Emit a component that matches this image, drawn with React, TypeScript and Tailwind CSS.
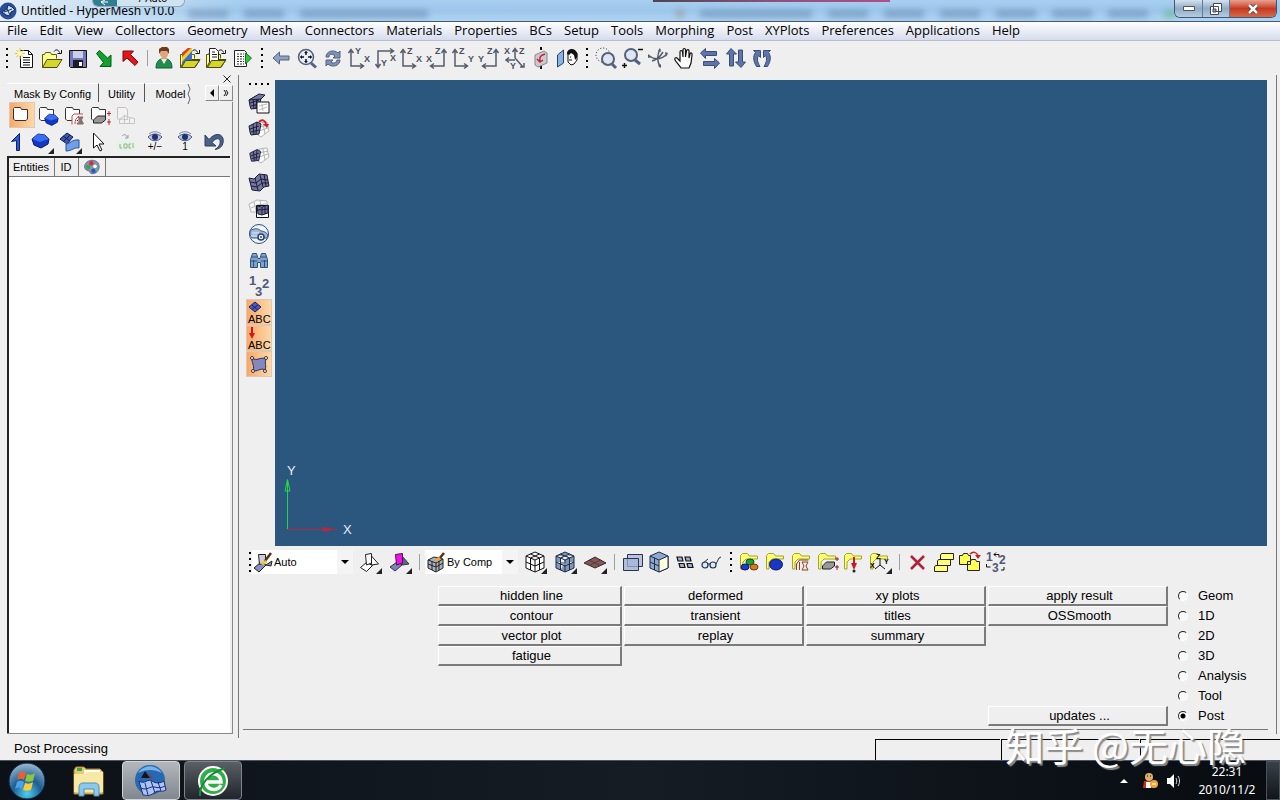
import { useState } from "react";
import type { ReactNode } from "react";

const MENUS = [
  "File", "Edit", "View", "Collectors", "Geometry", "Mesh", "Connectors", "Materials", "Properties",
  "BCs", "Setup", "Tools", "Morphing", "Post", "XYPlots", "Preferences", "Applications", "Help",
];

const PANELS = [
  ["hidden line", "contour", "vector plot", "fatigue"],
  ["deformed", "transient", "replay"],
  ["xy plots", "titles", "summary"],
  ["apply result", "OSSmooth"],
];

const PAGES = ["Geom", "1D", "2D", "3D", "Analysis", "Tool", "Post"];

// shared icon parts
const openFolder = (
  <>
    <path d="M2.5 21.500V8.500h2l1-2h5l1 2h5v4" fill="#ffff8c" stroke="#5a5a10" />
    <path d="M2.500 21.500l4.500-8h15l-5 8z" fill="#d6d62a" stroke="#4a4a10" />
    <path d="M14 5.500c2-2.500 4.500-2 5.500 1M21.500 4v3.500h-4" fill="none" stroke="#111" />
  </>
);
const tri = <path d="M24 18v6h-6z" fill="#222" />;
const yellowFolder = <path d="M2.500 19V5.500l2-2h5l2 2.500h8V9H8l-3 3v7z" fill="#ffff70" stroke="#a3a32c" />;
const whiteFolder = <path d="M3.500 16V5.500l1-1h6l1 2h6v9.500l-1.500 1.500h-11z" fill="#fdfdfd" stroke="#333" />;
const meshLeft = (
  <>
    <path d="M2 8l8-4 4 2-2 10-8 1-1-3z" fill="#74779f" stroke="#1c1c38" />
    <path d="M3 11l9-3M4 14l8-2M6 6l1 11M10 4l-1 12" fill="none" stroke="#1c1c38" />
  </>
);
const meshGhost = (
  <>
    <path d="M12 5l8-1 2 9-8 6-3-2z" fill="#f8f8f8" stroke="#b5b5b5" />
    <path d="M12 9l9-2M12 13l9-3M16 5l2 11" fill="none" stroke="#b5b5b5" />
  </>
);
const globe = (
  <>
    <path d="M2 9l6-5 7 1 4 4-1 5-7 4-7-3z" fill="#1238c4" stroke="#08186b" />
    <path d="M2 9l8 3 9-3-4-4-7-1z" fill="#3c6cf2" />
  </>
);
const cubeLines = "M12 2L21 6V18L12 22L3 18V6zM3 6L12 10L21 6M12 10V22M7.500 4L16.500 8V20M16.500 4L7.500 8V20M3 12L12 16L21 12";

const axes = (left: boolean, down: boolean, a: string, b: string) => (
  <>
    <g fill="none" stroke="#565c6c" strokeWidth="1.500">
      {down ? (
        <path d="M5 21V5H20M2.500 18L5 21.500L7.500 18M17 2.500L20.500 5L17 7.500" />
      ) : left ? (
        <path d="M19 4V20H6M16.500 7L19 3.500L21.500 7M9 17.500L5.500 20L9 22.500" />
      ) : (
        <path d="M4 4V20H16M1.500 7L4 3.500L6.500 7M13 17.500L16.500 20L13 22.500" />
      )}
    </g>
    <g fill="#4a5060" fontFamily="Liberation Sans, sans-serif" fontWeight="bold" fontSize="9">
      <text x={left ? 10 : 8} y={down ? 20 : 8}>{a}</text>
      <text x={left ? 1 : 17} y={down ? 15 : 16}>{b}</text>
    </g>
  </>
);

const ICONS: Record<string, ReactNode> = {
  newFile: (
    <>
      <path d="M6.500 4.500h8l4 4v13h-12z" fill="#fff" stroke="#111" />
      <path d="M14.500 4.500v4h4M9 11.500h7M9 14h7M9 16.500h7M9 19h7" fill="none" stroke="#111" />
      <path d="M6 2v11M1 7.500h10M2.500 4l7 7M9.500 4l-7 7" stroke="#e6bf3c" />
      <circle cx="6" cy="7.500" r="2.500" fill="#fff6b0" />
    </>
  ),
  open: openFolder,
  save: (
    <>
      <path d="M3.500 4.500h17v17h-16l-1-1z" fill="#7478b8" stroke="#111" />
      <path d="M7 5h10v7H7z" fill="#c9cfe8" />
      <path d="M7 14h10v7H7z" fill="#1b1b2b" />
      <path d="M13 16h3v4h-3z" fill="#fff" />
    </>
  ),
  importIcon: <path d="M4.500 7.500l3-3 8 7.500 3.500-3v11.500H8l3.500-4z" fill="#12a12c" stroke="#075c16" />,
  exportIcon: <path d="M5 5h10.500l-3 3.500 7.500 7.500-3 3.500-8-7.500L5 15.500z" fill="#e3171b" stroke="#7e0a0d" />,
  user: (
    <>
      <path d="M4 22c0-6 3-9 6-9h4c4 0 6 4 6 9z" fill="#1f8f4d" stroke="#11602f" />
      <path d="M9 13l3 5 3-5z" fill="#f5e6d8" />
      <path d="M8 3h8v6l-2 4h-3L8 9z" fill="#e0a67c" />
      <path d="M7 8V3l3-2h5l2 2v5l-2-3H9z" fill="#6b3a22" />
    </>
  ),
  openRainbow: (
    <>
      {openFolder}
      <path d="M4 18V7l6-5h4v12z" fill="#3b6be0" />
      <path d="M4 16V7l6-5h4v3z" fill="#e8d32a" />
      <path d="M4 11V7l6-5h3z" fill="#e23b2c" />
      <path d="M3.500 21.500l4-7h14l-5 7z" fill="#d6d62a" stroke="#4a4a10" />
    </>
  ),
  openDoc: (
    <>
      {openFolder}
      <path d="M5.500 16V2.500h6l3 3V14" fill="#fff" stroke="#222" />
      <path d="M8 6h3M8 8.500h5M8 11h5" stroke="#222" />
      <path d="M3.500 21.500l4-7h14l-5 7z" fill="#d6d62a" stroke="#4a4a10" />
    </>
  ),
  docRun: (
    <>
      <path d="M4.500 4.500h10l2 2v14h-12z" fill="#fff" stroke="#222" />
      <path d="M7 8h7M7 10.500h7M7 13h7M7 15.500h7M7 18h7" stroke="#333" strokeDasharray="2 1" />
      <path d="M15.500 7l6 5-6 6z" fill="#2dc53a" stroke="#0c7a19" />
    </>
  ),
  back: <path d="M4 12l6.500-6v4H20v4h-9.500v4z" fill="#8fa2c4" stroke="#52617f" />,
  fit: (
    <>
      <path d="M16 17l5 4.500" stroke="#52617f" strokeWidth="3" />
      <circle cx="11" cy="11" r="7.500" fill="#e8edf6" stroke="#52617f" strokeWidth="1.500" />
      <path d="M11 5.500v3.500M11 13v3.500M5.500 11H9M13 11h3.500" stroke="#111" strokeWidth="1.500" />
      <path d="M9 7l2-2 2 2zM9 15l2 2 2-2zM7 9l-2 2 2 2zM15 9l2 2-2 2z" fill="#111" />
    </>
  ),
  refresh: (
    <>
      <path d="M5 11c0-6 8-8 12-4l2-2v7h-7l2-2c-3-3-6-2-6 1z" fill="#7c90b6" stroke="#52617f" />
      <path d="M19 14c0 6-8 8-12 4l-2 2v-6h7l-2 2c3 2 5 1 6-2z" fill="#7c90b6" stroke="#52617f" />
    </>
  ),
  xyTop: axes(false, false, "Y", "X"),
  xyBottom: axes(false, true, "Y", "X"),
  xzLeft: axes(false, false, "Z", "X"),
  xzRight: axes(true, false, "Z", "X"),
  yzLeft: axes(false, false, "Z", "Y"),
  yzRight: axes(true, false, "Z", "Y"),
  iso: (
    <>
      <path d="M12 12V3M12 12l8 9M12 14H3M9.500 6L12 2.500L14.500 6M17 21h4v-4M6 11.500L3 14l3 2.500" fill="none" stroke="#565c6c" strokeWidth="1.500" />
      <g fill="#4a5060" fontFamily="Liberation Sans, sans-serif" fontWeight="bold" fontSize="9">
        <text x="1" y="8">X</text>
        <text x="16" y="8">Z</text>
        <text x="7" y="23">Y</text>
      </g>
    </>
  ),
  reverse: (
    <>
      <path d="M12 1v3M12 20v3" stroke="#111" strokeWidth="2" />
      <path d="M6 9l9-4 3 2v10l-9 4-3-2z" fill="#c8cbd2" stroke="#888" />
      <path d="M16 8c-4 1-6 3-5 7M8 13l3 3 3-2" fill="none" stroke="#c9202b" strokeWidth="1.500" />
    </>
  ),
  viewer: (
    <>
      <path d="M2.500 9l6-5v13l-6 4z" fill="#8ab4e6" stroke="#27406b" />
      <path d="M13 6l5-2 4 3v7l-3 4-3 1-3-3z" fill="#fff" stroke="#111" />
      <path d="M12 8c0-6 8-7 10-1 1 3 0 5-2 7l-1-5-3-2-2 2z" fill="#111" />
      <path d="M15 11h1M14 14h3" stroke="#111" />
    </>
  ),
  zoomArea: (
    <>
      <circle cx="9" cy="9" r="7" fill="none" stroke="#111" strokeDasharray="1 2" />
      <path d="M18 18l4 4" stroke="#52617f" strokeWidth="3" />
      <circle cx="14" cy="13" r="6" fill="#dfe6f1" stroke="#52617f" strokeWidth="2" />
    </>
  ),
  zoomInOut: (
    <>
      <path d="M15 14l5 4" stroke="#52617f" strokeWidth="3" />
      <circle cx="11" cy="9" r="6" fill="#dfe6f1" stroke="#52617f" strokeWidth="2" />
      <path d="M2 19.500h5M4.500 17v5M18 3.500h5" stroke="#111" strokeWidth="1.500" />
    </>
  ),
  rotate: (
    <>
      <path d="M14 3c-3 6-3 12 0 18M3 10c6 4 12 4 18-2M6 15c4-1 8-4 11-9" fill="none" stroke="#565c6c" strokeWidth="1.500" />
      <path d="M12 5l2-3 1 4zM19 6l3 1-2 4zM2 8v4l4-1zM12 20l3 2v-4z" fill="#565c6c" />
    </>
  ),
  pan: (
    <path
      d="M9 22c-2-3-5-6-6-8-1-2 1-3 2-2l3 3V6c0-2 2-2 2.500 0l.5 5V4c0-2 2.500-2 2.500 0v7l1-6c.5-2 2.500-1.500 2.500 0v7l1-4c.5-2 2.500-1 2 1l-1 8-2 5z"
      fill="#fff"
      stroke="#111"
      strokeWidth="1.200"
    />
  ),
  swapH: <path d="M2.500 7l5-4.500v3h11v4h-11v3zM21.500 17l-5-4.500v3h-11v4h11v3z" fill="#5d76a8" stroke="#3a4d77" />,
  swapV: <path d="M7 2.500L2.500 8h3v12h4V8h3zM17 21.500l4.500-5.500h-3V4h-4v12h-3z" fill="#5d76a8" stroke="#3a4d77" />,
  spin: (
    <>
      <path d="M10.500 4.500h-7l2 2c-3 4-2 9 1 14h3.500c-3-5-3-8-1.500-11l2 2z" fill="#5d76a8" stroke="#3a4d77" />
      <path d="M13.500 4.500h7l-2 2c3 4 2 9-1 14H14c3-5 3-8 1.500-11l-2 2z" fill="#5d76a8" stroke="#3a4d77" />
    </>
  ),
  // browser panel
  folder: whiteFolder,
  folderComp: <>{whiteFolder}<g transform="translate(7 8) scale(.8)">{globe}</g></>,
  folderMat: (
    <>
      {whiteFolder}
      <path d="M10 21.500V13l2-2h9M13 21c0-4 1-6 4-8M15 21h6l-2-4 2-3h-5l2 3z" fill="#fff" stroke="#c14646" />
      <path d="M16 21h6l-2-4 1-3h-5l2 3z" fill="#777" />
    </>
  ),
  folderProp: (
    <>
      {whiteFolder}
      <path d="M5.500 17l4-4h8v4l-4 3h-8z" fill="#999" stroke="#222" />
      <path d="M21 8v5M21 16v6M19 10.500h4M19 19h4" stroke="#b42a2a" />
    </>
  ),
  folderOff: (
    <path d="M3.500 16V4.500h8l2 2v10zM5.500 20.500v-4l5-4 5 2 5 1v5zM10.500 12v8M15.500 14v6" fill="#f2f2f2" stroke="#c4c4c4" />
  ),
  flag: <path d="M17.500 3.500v17h-3v-10l-5 1z" fill="#2b58d9" stroke="#0b2170" />,
  comp: <>{globe}{tri}</>,
  compMesh: (
    <>
      <path d="M2 9l7-6 6 4-6 7zM5 6l7 5M5.500 11.500L12 5" fill="#3c56b4" stroke="#101c50" />
      <path d="M8 14c4 0 6-5 13-4v8c-5-1-7 3-13 3z" fill="#6f9fe8" stroke="#2450a0" />
      {tri}
    </>
  ),
  pointer: <path d="M7.500 3v15l3.500-3 3 6 2-1-3-6h5z" fill="#fff" stroke="#111" />,
  label: (
    <>
      <path d="M3 11h18v10H3z" fill="#dff5e7" />
      <path d="M6 14v4h2M10 14v4h3v-4zM17 14h-2v4h2M19 13v5" stroke="#9fae80" fill="none" />
      <path d="M8 6c2-2 4-2 5 1M14 5v3h-3" stroke="#99a" fill="none" />
    </>
  ),
  palette: (
    <>
      <path d="M12 3c8 0 11 6 9 12-2 5-6 6-9 6s-2-3-5-4-5-2-5-6c1-5 5-8 10-8z" fill="#8b8fb4" stroke="#555a80" />
      <circle cx="11" cy="7" r="3" fill="#d32f3c" />
      <circle cx="7" cy="12" r="3" fill="#2cae48" />
      <circle cx="16" cy="11" r="2.500" fill="#fff" />
      <circle cx="14" cy="17" r="3" fill="#2b55c8" />
      <circle cx="18" cy="15" r="2" fill="#42c47a" />
    </>
  ),
  undo: <path d="M3 5v11h11l-4-3.500c3-4 7-5 8-2 1 4-2 7-5 9 7-1 9-6 8-11-2-6-9-5-14 1z" fill="#4a6088" stroke="#30405f" />,
  // display toolbar
  maskBox: (
    <>
      {meshLeft}
      <path d="M2 8l10-6 6 1-4 4z" fill="#74779f" stroke="#1c1c38" />
      <path d="M10 10h12v11H10z" fill="#fdfdfd" stroke="#111" />
      <path d="M12 14l8-2M12 18l8-3M15 12l1 7" stroke="#bbb" />
    </>
  ),
  maskRev: (
    <>
      {meshGhost}
      {meshLeft}
      <path d="M12 4c3-3 6-2 7 2" fill="none" stroke="#c9202b" strokeWidth="2" />
      <path d="M16 6h6l-2 4z" fill="#c9202b" />
    </>
  ),
  maskAdj: <>{meshGhost}<g transform="translate(1 2) scale(.9)">{meshLeft}</g></>,
  unmask: (
    <>
      <path d="M2 8l5 1 5-5 8 1 2 11-5 1-4 4-8-1z" fill="#74779f" stroke="#1c1c38" />
      <path d="M3 12l6 1 5-4 7 1M4 16l6 1 5-4 6 0M8 8l3 12M13 5l3 12M17 4l2 12" fill="none" stroke="#1c1c38" />
    </>
  ),
  unmaskBox: (
    <>
      <path d="M2 8l8-4 10 1v11H4z" fill="#f8f8f8" stroke="#b5b5b5" />
      <path d="M4 12l7-3 8-1M7 6l2 9M13 4l1 7" fill="none" stroke="#b5b5b5" />
      <path d="M9.500 9.500h12v12h-12z" fill="#fff" stroke="#111" />
      <path d="M10 10l5 1 6-2v8l-6 2-4-1z" fill="#6c709c" stroke="#1c1c38" />
      <path d="M11 14l10-1M15 11v8M18 10v8" stroke="#1c1c38" />
    </>
  ),
  car: (
    <>
      <circle cx="12" cy="12" r="9.500" fill="#eef4fb" stroke="#2e4f80" />
      <path d="M3 9c4-3 8-3 11 0 3 0 6 2 7 4l-1 3H5l-2-3z" fill="#9fb8d8" stroke="#3a5a8a" />
      <path d="M5 11h7M4 14h7" stroke="#e4eefa" />
      <circle cx="14" cy="15" r="3" fill="#fff" stroke="#24406b" strokeWidth="1.500" />
      <circle cx="14" cy="15" r="1" fill="#24406b" />
    </>
  ),
  find: (
    <>
      <path d="M3.500 19.500v-8l2-6h4l1.500 5h2l1.500-5h4l2 6v8h-7v-5h-3v5z" fill="#7fa3d0" stroke="#2f5078" />
      <path d="M5 9h5M14 9h5M4 13h6M14 13h6M6.500 12v7M17.500 12v7" stroke="#2f5078" />
    </>
  ),
  numbers: (
    <g fill="#4e5878" fontFamily="Liberation Sans, sans-serif" fontWeight="bold">
      <text x="2" y="11" fontSize="13">1</text>
      <text x="15" y="14" fontSize="13">2</text>
      <text x="8" y="22" fontSize="13">3</text>
    </g>
  ),
  elemAbc: (
    <>
      <path d="M2 7l6-5 6 5-6 5zM5 5l6 5M5 9.500L11 5" fill="#4a5cc0" stroke="#1b2560" />
      <text x="1" y="23" fontSize="11" fontFamily="Liberation Sans, sans-serif">ABC</text>
    </>
  ),
  loadAbc: (
    <>
      <path d="M5 1v7" stroke="#d01818" strokeWidth="2" />
      <path d="M2 7h6l-3 6z" fill="#d01818" />
      <text x="1" y="23" fontSize="11" fontFamily="Liberation Sans, sans-serif">ABC</text>
    </>
  ),
  surface: (
    <>
      <path d="M5 6c5 4 9-2 14 1-2 4 1 7-1 11-5-3-8 3-12 0 2-4-2-8-1-12z" fill="#8388bd" stroke="#2b3060" />
      <circle cx="5" cy="6" r="1.500" fill="#fff" stroke="#333" />
      <circle cx="19" cy="6" r="1.500" fill="#fff" stroke="#333" />
      <circle cx="6" cy="19" r="1.500" fill="#fff" stroke="#333" />
      <circle cx="18" cy="19" r="1.500" fill="#fff" stroke="#333" />
    </>
  ),
  // visualization toolbar
  auto: (
    <>
      <path d="M2 18l7-6 5 3-7 7z" fill="#8690c4" stroke="#222" />
      <path d="M6.500 4.500h7v8l-6 2z" fill="#c9cfe0" stroke="#222" />
      <path d="M14 15l6-4-1 5z" fill="#8690c4" stroke="#222" />
      <path d="M19 3l-6 8" stroke="#5a2f14" strokeWidth="2.500" />
      <path d="M8 13l6-3 1 3-4 2z" fill="#f2c235" />
    </>
  ),
  wireGeom: (
    <>
      <path d="M2.500 17.500l6-5 6 3-6 6z" fill="#fff" stroke="#222" />
      <path d="M13.500 6l7 8-7 1z" fill="#fff" stroke="#222" />
      <path d="M7.500 4.500l6-1V13l-5 2z" fill="#fff" stroke="#222" />
      {tri}
    </>
  ),
  shadeGeom: (
    <>
      <path d="M2 17l7-5 5 3-7 6z" fill="#7d82bd" stroke="#333" />
      <path d="M14 6l7 8-7 1z" fill="#60648c" stroke="#333" />
      <path d="M7.500 4.500l7-1V13l-6 2z" fill="#f012e8" stroke="#5a0a56" />
      {tri}
    </>
  ),
  byComp: (
    <>
      <path d="M3 10l6-3 9 2v9l-7 4-8-4z" fill="#aab0bd" stroke="#222" />
      <path d="M3 10l8 3 7-4M11 13v9M7 11v9M14 11v9M3 14l8 3 7-4" fill="none" stroke="#222" />
      <path d="M19 3l-5 6" stroke="#5a2f14" strokeWidth="2.500" />
      <path d="M10 9l4-2 2 2-4 3z" fill="#f2a535" />
    </>
  ),
  wireCube: <><path d={cubeLines} fill="#fff" stroke="#111" />{tri}</>,
  shadeCube: <><path d={cubeLines} fill="#8197b8" stroke="#1d2b44" />{tri}</>,
  shell: (
    <>
      <path d="M1 13l11-6 11 6-11 5z" fill="#8b5355" stroke="#2d2d2d" />
      <path d="M6 10l11 5.500M17.500 10L6 15.500" stroke="#444" />
      {tri}
    </>
  ),
  transparent: (
    <>
      <path d="M6.500 4.500h15v12h-15z" fill="#b9c4dc" stroke="#26344f" />
      <path d="M2.500 8.500h15v12h-15z" fill="#a9b8d6" fillOpacity=".9" stroke="#26344f" />
      <path d="M6.500 9v7.500H17" fill="none" stroke="#8292b4" />
    </>
  ),
  feature: (
    <>
      <path d="M12 2l9 4v12l-9 4-9-4V6z" fill="#8ea9d0" stroke="#1d2b44" />
      <path d="M12 10l9-4v12l-9 4z" fill="#fffde0" stroke="#1d2b44" />
      <path d="M3 6l9 4M7.500 8v12M3 12l9 4" stroke="#1d2b44" />
    </>
  ),
  shrink: (
    <path
      d="M4 7h5l1 4H5zM12 7h5l1 4h-5zM6 13.500h5l1 4H7zM14 13.500h5l1 4h-5z"
      fill="#a4acd0"
      stroke="#111"
      strokeWidth="1.200"
    />
  ),
  glasses: (
    <>
      <circle cx="6" cy="15" r="3" fill="#dbe9f8" stroke="#26344f" strokeWidth="1.200" />
      <circle cx="14" cy="15" r="3" fill="#dbe9f8" stroke="#26344f" strokeWidth="1.200" />
      <path d="M9 14h2M4 13l5-4M17 14l3-6 2-1" fill="none" stroke="#26344f" />
    </>
  ),
  yAssembly: (
    <>
      {yellowFolder}
      <ellipse cx="12" cy="12" rx="4" ry="3" fill="#1fa13a" stroke="#0a4a18" />
      <ellipse cx="7" cy="17" rx="4" ry="3" fill="#1b3cd0" stroke="#081a60" />
      <ellipse cx="16" cy="17" rx="4" ry="3" fill="#d97a20" stroke="#693808" />
    </>
  ),
  yComp: <>{yellowFolder}<ellipse cx="12" cy="14.500" rx="6.500" ry="5.500" fill="#1b36c4" stroke="#081a60" /></>,
  yMat: (
    <>
      {yellowFolder}
      <path d="M6.500 20v-6l3-4h9M9.500 20v-8M12 20h6l-2-4 2-4h-6l2 4z" fill="#eee" stroke="#8c4020" />
    </>
  ),
  yProp: (
    <>
      {yellowFolder}
      <path d="M6.500 16l4-4h8v4l-4 3h-8z" fill="#999" stroke="#222" />
      <path d="M21 7v4M21 15v5M19 9h4M19 17h4" stroke="#8c2020" />
    </>
  ),
  yLoad: (
    <>
      {yellowFolder}
      <path d="M12 7v8" stroke="#d01818" strokeWidth="2" />
      <path d="M9 13h6l-3 7z" fill="#d01818" />
      <circle cx="12" cy="21" r="1.500" fill="#222" />
    </>
  ),
  ySys: (
    <>
      {yellowFolder}
      <path d="M12 8v7l-5 4M12 15l5 4" fill="none" stroke="#111" />
      <g fontFamily="Liberation Sans, sans-serif" fontWeight="bold" fontSize="7">
        <text x="8" y="9">Z</text>
        <text x="2" y="18">X</text>
        <text x="16" y="14">Y</text>
      </g>
      {tri}
    </>
  ),
  remove: <path d="M5 6l13 13M18 6L5 19" stroke="#b01f35" strokeWidth="2.500" />,
  organize: (
    <path
      d="M8.500 9.500V5l1-1.500h12v6zM5.500 15.500V11l1-1.500h12v6zM2.500 21.500V17l1-1.500h12v6z"
      fill="#ffff78"
      stroke="#222"
    />
  ),
  move: (
    <>
      <path d="M1.500 5.500h3l1-2h4l1 2h2v9h-11zM9.500 11.500h3l1-2h4l1 2h3v9h-12z" fill="#ffff58" stroke="#222" />
      <path d="M12 4c3-3 7-2 8 2" fill="none" stroke="#c9202b" strokeWidth="1.500" />
      <path d="M17 5h6l-3 4z" fill="#c9202b" />
    </>
  ),
  renumber: (
    <>
      <g fill="#4e5878" fontFamily="Liberation Sans, sans-serif" fontWeight="bold" fontSize="12">
        <text x="2" y="11">1</text>
        <text x="15" y="14">2</text>
        <text x="8" y="22">3</text>
      </g>
      <path d="M10 4.500h5v3M12 2.500l-2 2 2 2M2.500 14v3h4M17 20h3v-3" fill="none" stroke="#111" />
    </>
  ),
};

function Icon({ name }: { name: string }) {
  return (
    <svg viewBox="0 0 24 24" className="h-6 w-6 shrink-0" aria-hidden="true">
      {ICONS[name]}
    </svg>
  );
}

function Tool({ name, active }: { name: string; active?: boolean }) {
  return (
    <button
      type="button"
      aria-label={name}
      className={
        active
          ? "flex h-[26px] w-[26px] shrink-0 items-center justify-center border border-[#e0c8b0] bg-gradient-to-r from-[#f8a868] to-[#fcd8a8]"
          : "flex h-[26px] w-[26px] shrink-0 items-center justify-center"
      }
    >
      <Icon name={name} />
    </button>
  );
}

function Tools({ names }: { names: string[] }) {
  return (
    <>
      {names.map((n) => (
        <Tool key={n} name={n} />
      ))}
    </>
  );
}

function Grip() {
  return (
    <div className="flex w-[13px] shrink-0 flex-col items-center gap-1">
      {[0, 1, 2, 3].map((i) => (
        <span key={i} className="h-0.5 w-0.5 bg-black" />
      ))}
    </div>
  );
}

function Divider({ wide }: { wide?: boolean }) {
  return (
    <div className={wide ? "flex w-3 shrink-0 justify-center" : "flex w-2 shrink-0 justify-center"}>
      <span className="h-4 w-px bg-[#a0a0a0]" />
    </div>
  );
}

function Combo({ icon, label, options, width }: { icon: string; label: string; options: string[]; width: string }) {
  return (
    <div className={`flex h-6 shrink-0 items-center bg-white ${width}`}>
      <Icon name={icon} />
      <select aria-label={label} className="-ml-0.5 min-w-0 flex-1 appearance-none bg-transparent text-[11px] outline-none">
        {options.map((o) => (
          <option key={o}>{o}</option>
        ))}
      </select>
      <span className="flex h-6 w-4 items-center justify-center bg-[#f4f4f4]">
        <svg viewBox="0 0 8 4" className="h-1 w-2"><path d="M0 0h8L4 4z" /></svg>
      </span>
    </div>
  );
}

function TitleBar() {
  return (
    <header className="relative flex h-[21px] items-center overflow-hidden bg-gradient-to-b from-[#a9cff0] via-[#9cc6ea] to-[#b0d4f2] font-['Noto_Sans',sans-serif]">
      <div className="absolute inset-y-0 left-0 w-60 bg-gradient-to-r from-[#e4eef8] to-transparent" />
      <div className="absolute left-[188px] top-2.5 flex gap-4 opacity-30 blur-[3px]">
        <span className="h-2 w-10 bg-[#2c4f78]" />
        <span className="h-2 w-10 bg-[#2c4f78]" />
        <span className="h-2 w-32 bg-[#2c4f78]" />
      </div>
      <div className="absolute left-[676px] top-2.5 flex gap-4 opacity-30 blur-[3px]">
        <span className="h-2 w-2 bg-[#806020]" />
        <span className="h-2 w-28 bg-[#2c4f78]" />
        <span className="h-2 w-10 bg-[#2c4f78]" />
        <span className="h-2 w-10 bg-[#2c4f78]" />
        <span className="h-2 w-10 bg-[#2c4f78]" />
        <span className="h-2 w-10 bg-[#2c4f78]" />
        <span className="h-2 w-10 bg-[#2c4f78]" />
        <span className="h-2 w-10 bg-[#2c4f78]" />
        <span className="h-2 w-3 bg-[#1f9e1f]" />
      </div>
      <svg viewBox="0 0 18 18" className="relative -ml-px h-[18px] w-[18px] shrink-0">
        <circle cx="9" cy="9" r="8.500" fill="#2a4f97" />
        <path d="M3 10l5-3 1-4 4 2 3 3-4 2-1 4-4-1z" fill="#cfe0f6" stroke="#12295c" />
        <path d="M5 10l8-3M8 7l3 6" stroke="#12295c" />
      </svg>
      <h1 className="relative ml-1 text-[12px] leading-5 text-black">Untitled - HyperMesh v10.0</h1>
      <div className="absolute left-[92px] top-0 flex h-[7px] w-[93px] overflow-hidden rounded-b-md border border-t-0 border-[#8fa9bd] bg-[#cfe4f0]">
        <span className="flex h-full w-6 items-center justify-center bg-[#2f7f90]">
          <svg viewBox="0 0 10 6" className="h-1.5 w-2.5"><path d="M5 0L1 2l4 3M1 2h7" fill="none" stroke="#fff" /></svg>
        </span>
        <span className="-mt-2 ml-4 text-[10px] leading-3">- / Auto</span>
      </div>
      <div className="absolute left-[51%] top-0 h-0.5 w-[237px] bg-gradient-to-r from-[#4c4650] via-[#8c5080] to-[#b05088]" />
      <div className="absolute right-[3px] top-0 flex h-[18px] overflow-hidden rounded-b-md border border-t-0 border-[#3d5877] text-white">
        <button type="button" aria-label="Minimize" className="flex w-7 items-center justify-center border-r border-[#5f7c9c] bg-gradient-to-b from-[#d3e2f0] via-[#92abc6] to-[#b4cbe2]">
          <svg viewBox="0 0 12 5" className="h-[5px] w-3"><path d="M.5.5h11v4H.5z" fill="#fff" stroke="#4a5566" /></svg>
        </button>
        <button type="button" aria-label="Restore" className="flex w-[27px] items-center justify-center border-r border-[#5f7c9c] bg-gradient-to-b from-[#d3e2f0] via-[#92abc6] to-[#b4cbe2]">
          <svg viewBox="0 0 12 12" className="h-3 w-3"><path d="M3.500.5h8v8h-8zM.5 3.500h8v8h-8z" fill="#fff" stroke="#3e4a5c" /><path d="M3 6h3v3H3z" fill="#8ba3c0" stroke="#3e4a5c" /></svg>
        </button>
        <button type="button" aria-label="Close window" className="flex w-[46px] items-center justify-center bg-gradient-to-b from-[#e8a090] via-[#c43a20] to-[#d8684a]">
          <svg viewBox="0 0 12 10" className="h-2.5 w-3"><path d="M2 1l8 8M10 1L2 9" stroke="#5a2a28" strokeWidth="4" /><path d="M2 1l8 8M10 1L2 9" stroke="#fff" strokeWidth="2.500" /></svg>
        </button>
      </div>
    </header>
  );
}

function Eye({ children }: { children: string }) {
  return (
    <button type="button" className="flex h-[22px] w-7 shrink-0 flex-col items-center text-[10px] leading-[10px]">
      <svg viewBox="0 0 16 11" className="h-[11px] w-4 shrink-0" aria-hidden="true">
        <path d="M1 6c4-4 10-4 14 0-4 5-10 5-14 0z" fill="#b9c4e0" stroke="#4a5780" />
        <path d="M2 3c3-3 9-3 12 0" fill="none" stroke="#7782a4" />
        <circle cx="8" cy="6" r="3" fill="#1e2f78" />
      </svg>
      {children}
    </button>
  );
}

function Browser() {
  return (
    <aside className="flex w-[239px] shrink-0 flex-col border-r border-[#777] pb-1 pl-[7px] pr-[5px]">
      <div className="flex h-2 items-center justify-end pr-0.5">
        <button type="button" aria-label="Close panel">
          <svg viewBox="0 0 8 8" className="h-2 w-2"><path d="M.5.5l7 7M7.500.5l-7 7" stroke="#222" /></svg>
        </button>
      </div>
      <div className="flex h-[19px] text-[11px] leading-5">
        <button type="button" className="w-[92px] border-r border-t border-r-[#555] border-t-white">Mask By Config</button>
        <button type="button" className="w-[46px] border-r border-t border-r-[#555] border-t-white">Utility</button>
        <button type="button" className="relative w-[47px] border-t border-white pl-1">
          Model
          <svg viewBox="0 0 5 20" className="absolute right-0 top-0 h-5 w-[5px]"><path d="M1 0l2 5-2 5 2 5-2 5" fill="none" stroke="#666" /></svg>
        </button>
        <div className="ml-auto mt-0.5 flex h-4">
          <button type="button" aria-label="Previous tab" className="flex w-3.5 items-center justify-center border border-[#888] border-l-white border-t-white">
            <svg viewBox="0 0 4 8" className="h-2 w-1"><path d="M4 0v8L0 4z" /></svg>
          </button>
          <button type="button" aria-label="Next tab" className="flex w-3.5 items-center justify-center border border-[#888] border-l-white border-t-white">
            <svg viewBox="0 0 6 8" className="h-2 w-1.5"><path d="M1 1l2 3-2 3M3 1l2 3-2 3" fill="none" stroke="#111" /></svg>
          </button>
        </div>
      </div>
      <div className="flex flex-1 flex-col border-b border-r border-[#888] pr-0.5">
        <div className="flex pl-0.5">
          <Tool name="folder" active />
          <Tools names={["folderComp", "folderMat", "folderProp", "folderOff"]} />
        </div>
        <div className="-ml-1.5 flex h-7 items-center gap-0.5">
          <Tools names={["flag", "comp", "compMesh", "pointer", "label"]} />
          <Eye>+/−</Eye>
          <Eye>1</Eye>
          <Tool name="undo" />
        </div>
        <div className="flex-1 border-l-2 border-t-2 border-[#222] bg-white">
          <table className="w-full border-collapse bg-[#efefef] text-left text-[11px] leading-[18px]">
            <thead>
              <tr className="border-b border-[#777]">
                <th scope="col" className="w-[45px] border-r border-[#777] pl-1 font-normal">Entities</th>
                <th scope="col" className="w-6 border-r border-[#777] pl-1.5 font-normal">ID</th>
                <th scope="col" aria-label="Color" className="w-[27px] border-r border-[#777]">
                  <svg viewBox="0 0 24 24" className="mx-auto h-[18px] w-[18px]">{ICONS.palette}</svg>
                </th>
                <th />
              </tr>
            </thead>
          </table>
        </div>
      </div>
    </aside>
  );
}

function ViewPort() {
  return (
    <div className="flex flex-1 items-end bg-[#2b567e]">
      <svg viewBox="0 0 90 90" className="h-[90px] w-[90px]">
        <path d="M12 73h1V24h-1z" fill="#1fd84a" />
        <path d="M12.500 23.500L10 35h5z" fill="none" stroke="#22d84a" />
        <path d="M12 73h50v1H12z" fill="#b8283c" />
        <path d="M48 71l13 2.500L48 76z" fill="#b8283c" />
        <text x="12" y="19" fontSize="13" fill="#e8eef4" fontFamily="Liberation Sans, sans-serif">Y</text>
        <text x="68" y="78" fontSize="13" fill="#e8eef4" fontFamily="Liberation Sans, sans-serif">X</text>
      </svg>
    </div>
  );
}

function PanelButton({ label }: { label: string }) {
  return (
    <button type="button" className="h-5 w-full border-b-2 border-l border-r-2 border-t border-b-[#7b7b7b] border-l-white border-r-[#7b7b7b] border-t-white pl-1 text-center text-[13px] leading-[17px]">
      {label}
    </button>
  );
}

function MenuPanel() {
  const [page, setPage] = useState("Post");

  return (
    <section className="ml-1 mr-2 flex h-[152px] border-b border-[#777] pl-[195px] pt-2">
      <div className="grid flex-1 grid-cols-[186fr_182fr_182fr_182fr] text-black">
        {PANELS.map((col, i) => (
          <div key={i} className="flex flex-col pr-0.5">
            {col.map((label) => (
              <PanelButton key={label} label={label} />
            ))}
            {i === 3 && <div className="mb-0.5 mt-auto"><PanelButton label="updates ..." /></div>}
          </div>
        ))}
      </div>
      <fieldset className="w-[98px] shrink-0 pl-2">
        {PAGES.map((p) => (
          <label key={p} className="flex h-5 items-center gap-2.5 text-[13px]">
            <input
              type="radio"
              name="page"
              checked={page === p}
              onChange={() => setPage(p)}
              className="h-2.5 w-2.5 appearance-none rounded-full border border-white border-l-[#222] border-t-[#222] bg-[#f8f8f8] checked:bg-[radial-gradient(circle,#000_2px,#fff_3px)]"
            />
            {p}
          </label>
        ))}
      </fieldset>
    </section>
  );
}

function StatusBar() {
  return (
    <footer className="relative flex h-[22px] items-end bg-[#efefef]">
      <p className="flex-1 pl-3.5 text-[13px] leading-[22px]">Post Processing</p>
      <div className="h-[21px] w-[125px] border-l border-t border-black" />
      <div className="ml-px h-[21px] w-[138px] border-l border-t border-black" />
      <div className="ml-px h-[21px] w-[140px] border-l border-t border-black" />
      <span className="absolute bottom-[-8px] right-[34px] z-10 whitespace-nowrap font-['Noto_Sans_CJK_SC',sans-serif] text-[39px] leading-[48px] text-white [text-shadow:2px_2px_1px_#8c8c8c]">
        知乎 @无心隐
      </span>
    </footer>
  );
}

function TaskBar() {
  return (
    <nav className="flex h-10 shrink-0 items-stretch border-t border-[#4b5560] bg-gradient-to-r from-[#0c1117] via-[#151c24] to-[#080c11] font-['Noto_Sans',sans-serif] text-white">
      <button type="button" aria-label="Start" className="flex w-[54px] items-center justify-center">
        <svg viewBox="0 0 38 38" className="h-[38px] w-[38px]">
          <defs>
            <radialGradient id="orb" cx="50%" cy="85%" r="80%">
              <stop offset="0" stopColor="#4fd0f0" />
              <stop offset=".5" stopColor="#1d5c94" />
              <stop offset="1" stopColor="#8fb0c8" />
            </radialGradient>
          </defs>
          <circle cx="19" cy="19" r="18" fill="url(#orb)" stroke="#0c2238" />
          <path d="M11 11c3-2 5-1 7 0l-2 7c-2-1-4-2-7 0z" fill="#e8612c" />
          <path d="M19 12c3 1 5 1 8-1l-2 8c-3 1-5 1-8 0z" fill="#8cc63f" />
          <path d="M9 20c3-2 5-1 7 0l-2 7c-2-2-4-2-7 0z" fill="#4aa3e8" />
          <path d="M17 21c3 1 5 1 8-1l-2 8c-3 1-5 1-8 0z" fill="#fbcb3a" />
        </svg>
      </button>
      <button type="button" aria-label="Explorer" className="ml-1 flex w-[62px] items-center justify-center">
        <svg viewBox="0 0 34 32" className="h-8 w-[34px]">
          <path d="M2 5l2-3h8l2 2h14l3 3v22H2z" fill="#e8c96c" stroke="#a78432" />
          <path d="M5 3h5v3H5z" fill="#3aa053" />
          <path d="M12 5h16v4H12z" fill="#fff" />
          <path d="M2 9h11l2-2h16v20H2z" fill="#f9e7a4" />
          <path d="M7 31v-9c0-3 2-4 4-4h12c2 0 4 1 4 4v9h-5v-7H12v7z" fill="#8cc8ec" stroke="#4e90bd" />
        </svg>
      </button>
      <button type="button" aria-label="HyperMesh" className="ml-0.5 flex w-[58px] items-center justify-center rounded-sm border border-[#d0d3d6] bg-gradient-to-b from-[#b4b8bc] to-[#80878e]">
        <svg viewBox="0 0 36 36" className="h-9 w-9">
          <circle cx="17" cy="17" r="15" fill="#2668b2" />
          <path d="M5 10c6-9 18-9 24 0-8-4-16-4-24 0z" fill="#74b4ea" />
          <path d="M8 15l4-7 5 7z" fill="#151515" />
          <path d="M17 15l-3-5 6 5z" fill="#a03030" />
          <path d="M6 18c6 4 9-3 13 0s9 2 12 0l2 9c-5 3-7-1-12 3s-8 2-11 2z" fill="#aac2f6" stroke="#1b2f74" />
          <path d="M8 25c6 3 9-2 13-1s8 1 11-1M12 20l3 12M18 18l4 12M25 19l3 9" fill="none" stroke="#1b2f74" />
        </svg>
      </button>
      <button type="button" aria-label="Browser" className="ml-1 flex w-[58px] items-center justify-center rounded-sm border border-[#7e858c] bg-gradient-to-b from-[#5a6066] to-[#20262c]">
        <svg viewBox="0 0 34 34" className="h-[34px] w-[34px]">
          <circle cx="17" cy="17" r="15" fill="#fff" />
          <circle cx="17" cy="17" r="13" fill="#2fae48" />
          <path d="M25 21c-2 4-6 5-10 4-6-2-7-10-2-14 5-3 12 0 12 7H11" fill="none" stroke="#fff" strokeWidth="3.500" />
          <path d="M4 32C3 22 12 9 30 4" fill="none" stroke="#188a35" strokeWidth="2" />
        </svg>
      </button>
      <div className="ml-auto flex items-center">
        <svg viewBox="0 0 8 4" className="h-1 w-2"><path d="M0 4l4-4 4 4z" fill="#fff" /></svg>
        <svg viewBox="0 0 16 16" className="ml-3.5 h-4 w-4">
          <circle cx="7" cy="4" r="4" fill="#d8b070" />
          <path d="M1 15l1-7h9l2 7z" fill="#d82818" />
          <path d="M4 9h5v6H4z" fill="#fff" />
          <circle cx="12" cy="11" r="4" fill="#f5a62a" />
          <path d="M10 11h4" stroke="#fff" strokeWidth="1.500" />
          <path d="M5 3h1M8 3h1" stroke="#111" />
        </svg>
        <svg viewBox="0 0 16 16" className="ml-2 h-4 w-4">
          <path d="M1 5h3l4-4v14l-4-4H1z" fill="#fff" />
          <path d="M10 5c1 2 1 4 0 6M12 3c2 3 2 7 0 10" fill="none" stroke="#ddd" />
        </svg>
        <div className="ml-1.5 w-[78px] text-center text-[12px] leading-[18px]">
          <div>22:31</div>
          <div>2010/11/2</div>
        </div>
        <button type="button" aria-label="Show desktop" className="h-full w-3.5 border border-[#4a535c] bg-gradient-to-b from-[#3a4148] to-[#10151a]" />
      </div>
    </nav>
  );
}

export default function App() {
  return (
    <div className="flex min-h-screen flex-col overflow-hidden bg-[#efefef] font-['Liberation_Sans',sans-serif] text-black">
      <TitleBar />
      <nav className="flex h-5 shrink-0 items-center gap-3 border-b border-t border-b-[#b8bcd0] border-t-[#44597a] bg-gradient-to-b from-white to-[#d6dcee] pl-[7px] font-['Open_Sans',sans-serif] text-[13px]">
        {MENUS.map((m) => (
          <button key={m} type="button">{m}</button>
        ))}
      </nav>
      <div className="flex h-[34px] shrink-0 items-center">
        <Grip />
        <Tools names={["newFile", "open", "save", "importIcon", "exportIcon"]} />
        <Divider />
        <Tools names={["user", "openRainbow", "openDoc", "docRun"]} />
        <Grip />
        <Tools names={["back", "fit", "refresh", "xyTop", "xyBottom", "xzLeft", "xzRight", "yzLeft", "yzRight", "iso", "reverse", "viewer"]} />
        <Grip />
        <Tools names={["zoomArea", "zoomInOut", "rotate", "pan", "swapH", "swapV", "spin"]} />
      </div>
      <main className="flex flex-1">
        <Browser />
        <div className="mb-1 mr-[3px] flex min-w-0 flex-1 flex-col border-r border-[#777] pt-[5px]">
          <div className="flex flex-1">
            <div className="flex w-9 flex-col items-center pl-1">
              <div className="flex h-[11px] items-center gap-1 pb-1">
                {[0, 1, 2, 3].map((i) => (
                  <span key={i} className="h-0.5 w-0.5 bg-black" />
                ))}
              </div>
              <Tools names={["maskBox", "maskRev", "maskAdj", "unmask", "unmaskBox", "car", "find", "numbers"]} />
              <Tool name="elemAbc" active />
              <Tool name="loadAbc" active />
              <Tool name="surface" active />
            </div>
            <ViewPort />
            <div className="w-[9px]" />
          </div>
          <div className="flex h-8 shrink-0 items-center pl-1">
            <Grip />
            <Combo icon="auto" label="Geometry color mode" options={["Auto", "By Comp", "By Topo"]} width="-ml-1 mr-1 w-[101px]" />
            <Tool name="wireGeom" />
            <div className="w-1" />
            <Tool name="shadeGeom" />
            <Divider wide />
            <Combo icon="byComp" label="Element color mode" options={["By Comp", "By Prop", "By Mat"]} width="w-[93px] mr-1" />
            <Tool name="wireCube" />
            <div className="w-1" />
            <Tool name="shadeCube" />
            <div className="w-1" />
            <Tool name="shell" />
            <Divider wide />
            <Tools names={["transparent", "feature", "shrink", "glasses"]} />
            <Grip />
            <Tools names={["yAssembly", "yComp", "yMat", "yProp", "yLoad", "ySys"]} />
            <Divider wide />
            <Tools names={["remove", "organize", "move", "renumber"]} />
          </div>
          <MenuPanel />
          <div className="h-1" />
        </div>
      </main>
      <StatusBar />
      <TaskBar />
    </div>
  );
}
